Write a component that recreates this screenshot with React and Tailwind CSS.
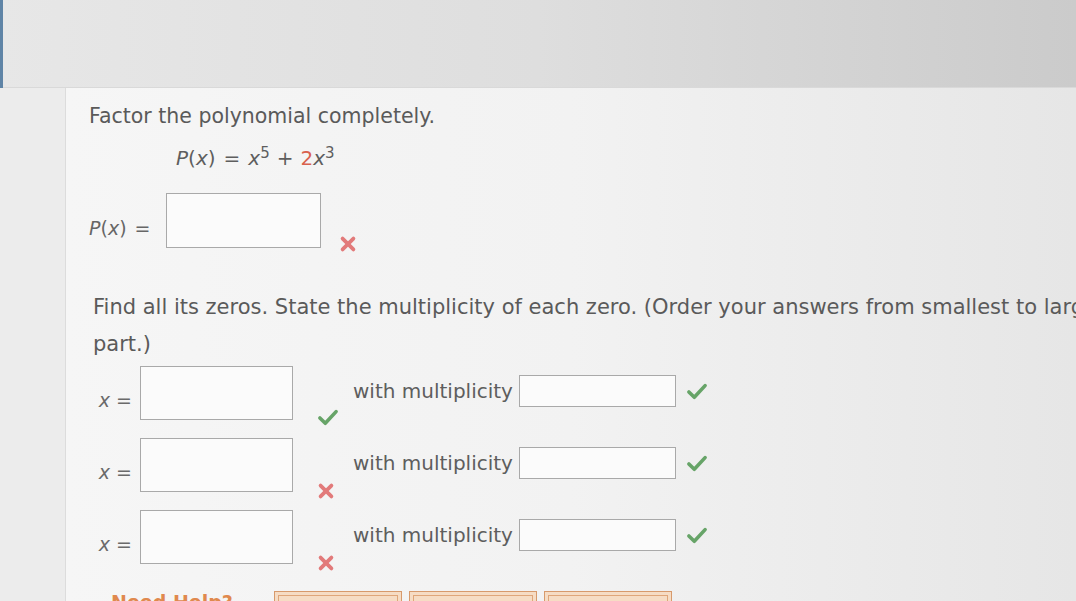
import React from 'react'

const font = { fontFamily: '"DejaVu Sans", Verdana, sans-serif' }

function RedX({ className = '' }) {
  return (
    <svg viewBox="0 0 20 20" className={`h-[18px] w-[18px] ${className}`}>
      <path d="M4 4 L16 16 M16 4 L4 16" stroke="#e27a7a" strokeWidth="4.2" strokeLinecap="round" fill="none" />
    </svg>
  )
}

function Check({ className = '' }) {
  return (
    <svg viewBox="0 0 24 20" className={`h-[18px] w-[22px] ${className}`}>
      <path d="M3 11 L9 17 L21 4" stroke="#67a468" strokeWidth="4" strokeLinecap="round" strokeLinejoin="round" fill="none" />
    </svg>
  )
}

function Box({ className = '' }) {
  return <div className={`border border-[#a9a9a9] bg-[#fbfbfb] ${className}`} />
}

function ZeroRow({ mark }) {
  return (
    <div className="flex items-start">
      <div className="flex h-[54px] w-[51px] items-center justify-end pr-[8px] pt-[14px] text-[19px] text-[#6a6a6a]">
        <span className="italic">x</span>
        <span className="ml-[6px]">=</span>
      </div>
      <Box className="h-[54px] w-[153px]" />
      <div className="flex h-[54px] w-[60px] items-end pl-[24px]">
        {mark === 'check' ? <Check className="mb-[-6px]" /> : <RedX className="mb-[-8px]" />}
      </div>
      <div className="flex items-center pt-[9px]">
        <span className="w-[166px] text-[20px] text-[#5e5e5e]">with multiplicity</span>
        <Box className="h-[32px] w-[157px]" />
        <Check className="ml-[10px]" />
      </div>
    </div>
  )
}

export default function App() {
  return (
    <div className="relative flex h-[601px] w-[1076px] flex-col overflow-hidden bg-[#ececec]" style={font}>
      <div className="flex h-[88px] shrink-0 border-b border-[#d9d9d9] bg-gradient-to-r from-[#e7e7e7] via-[#dedede] to-[#cbcbcb]">
        <div className="h-[93px] w-[3px] bg-[#5f84a6]" />
      </div>
      <div className="flex min-h-0 flex-1">
        <div className="w-[65px] shrink-0 bg-[#ececec]" />
        <div className="min-w-0 flex-1 border-l border-[#dcdcdc] bg-gradient-to-r from-[#f6f6f6] via-[#f2f2f2] to-[#e6e6e6] pl-[23px] pt-[14px] text-[#5a5a5a]">
          <p className="text-[20.5px] leading-[28px]">Factor the polynomial completely.</p>
          <p className="ml-[87px] mt-[15px] text-[20px] leading-[26px] text-[#5e5e5e]">
            <span className="italic">P</span>(<span className="italic">x</span>)<span className="mx-[8px]">=</span>
            <span className="italic">x</span>
            <sup className="text-[15px]">5</sup>
            <span className="mx-[7px]">+</span>
            <span className="text-[#d9614e]">2</span>
            <span className="italic">x</span>
            <sup className="text-[15px]">3</sup>
          </p>

          <div className="mt-[22px] flex items-start">
            <div className="flex h-[55px] w-[77px] items-center pt-[16px] text-[19px] text-[#666]">
              <span className="italic">P</span>(<span className="italic">x</span>)<span className="ml-[8px]">=</span>
            </div>
            <Box className="h-[55px] w-[155px]" />
            <RedX className="ml-[18px] mt-[42px]" />
          </div>

          <p className="mt-[36px] whitespace-nowrap pl-[4px] text-[21px] leading-[37px]">
            Find all its zeros. State the multiplicity of each zero. (Order your answers from smallest to largest real part, then from smallest to largest imaginary
          </p>
          <p className="pl-[4px] text-[21px] leading-[37px]">part.)</p>

          <div className="mt-[3px] flex flex-col gap-[18px]">
            <ZeroRow mark="check" />
            <ZeroRow mark="x" />
            <ZeroRow mark="x" />
          </div>

          <div className="mt-[27px] flex items-start">
            <span className="w-[185px] pl-[22px] text-[19px] leading-[22px] font-bold text-[#e0894e]">Need Help?</span>
            <div className="flex gap-[7px]">
              <div className="h-[30px] w-[128px] border border-[#d79a6c] bg-[#f6dcc4] p-[3px]">
                <div className="h-full border border-[#dfa67a]" />
              </div>
              <div className="h-[30px] w-[128px] border border-[#d79a6c] bg-[#f6dcc4] p-[3px]">
                <div className="h-full border border-[#dfa67a]" />
              </div>
              <div className="h-[30px] w-[128px] border border-[#d79a6c] bg-[#f6dcc4] p-[3px]">
                <div className="h-full border border-[#dfa67a]" />
              </div>
            </div>
          </div>
        </div>
      </div>
    </div>
  )
}
